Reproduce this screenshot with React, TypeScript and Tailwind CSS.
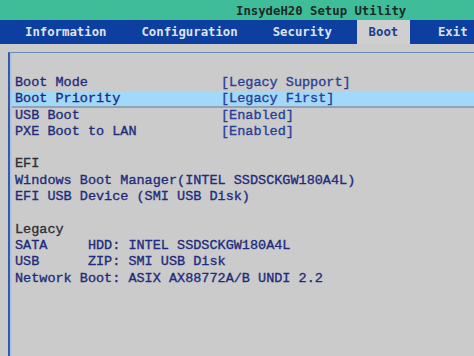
import React from "react";

const mono = { fontFamily: '"Liberation Mono", "DejaVu Sans Mono", monospace' };
const tabFont = { fontFamily: '"DejaVu Sans Mono", "Liberation Mono", monospace' };

type Row = { label?: string; value?: string; kind: "item" | "head" | "blank"; selected?: boolean };

const rows: Row[] = [
  { kind: "item", label: "Boot Mode", value: "[Legacy Support]" },
  { kind: "item", label: "Boot Priority", value: "[Legacy First]", selected: true },
  { kind: "item", label: "USB Boot", value: "[Enabled]" },
  { kind: "item", label: "PXE Boot to LAN", value: "[Enabled]" },
  { kind: "blank" },
  { kind: "head", label: "EFI" },
  { kind: "item", label: "Windows Boot Manager(INTEL SSDSCKGW180A4L)" },
  { kind: "item", label: "EFI USB Device (SMI USB Disk)" },
  { kind: "blank" },
  { kind: "head", label: "Legacy" },
  { kind: "item", label: "SATA     HDD: INTEL SSDSCKGW180A4L" },
  { kind: "item", label: "USB      ZIP: SMI USB Disk" },
  { kind: "item", label: "Network Boot: ASIX AX88772A/B UNDI 2.2" },
];

export default function App() {
  return (
    <div className="w-[474px] h-[356px] bg-[#cbcbcb] overflow-hidden flex flex-col">
      <div
        className="h-[20px] bg-[#3fbd99] text-[#1b2a26] font-bold text-[12.3px] leading-[22px] pl-[236px] whitespace-pre"
        style={tabFont}
      >
        InsydeH20 Setup Utility
      </div>
      <div
        className="h-[24px] bg-[#0c3f9f] flex items-stretch text-[#dfe3ee] font-bold text-[12.3px] whitespace-pre"
        style={tabFont}
      >
        <div className="ml-[25px] flex items-center">Information</div>
        <div className="ml-[35px] flex items-center">Configuration</div>
        <div className="ml-[35px] flex items-center">Security</div>
        <div className="ml-[25px] w-[53px] flex items-center justify-center bg-[#cfcfcf] text-[#1a3f8f]">Boot</div>
        <div className="ml-[28px] flex items-center">Exit</div>
      </div>
      <div className="mt-[8px] ml-[8px] flex-1 border-t border-t-[#6c8cb8] border-l-2 border-l-[#3559a3]">
        <div className="h-full border-l-2 border-l-[#a9c8e6] pt-[22px] [-webkit-text-stroke:0.35px]" style={mono}>
          {rows.map((r, i) => {
            if (r.kind === "blank") return <div key={i} className="h-[16.3px]" />;
            const color = r.kind === "head" ? "text-[#2e2e36]" : "text-[#1f2c7c]";
            return (
              <div
                key={i}
                className={
                  "h-[16.3px] leading-[16.3px] text-[13.5px] flex whitespace-pre pl-[3px] " +
                  (r.selected ? "bg-[#a2d8fa] shadow-[inset_0_-2px_0_#8ea4b9]" : "")
                }
              >
                <span className={"w-[206px] shrink-0 " + color}>{r.label}</span>
                {r.value && <span className="text-[#283f96]">{r.value}</span>}
              </div>
            );
          })}
        </div>
      </div>
    </div>
  );
}
